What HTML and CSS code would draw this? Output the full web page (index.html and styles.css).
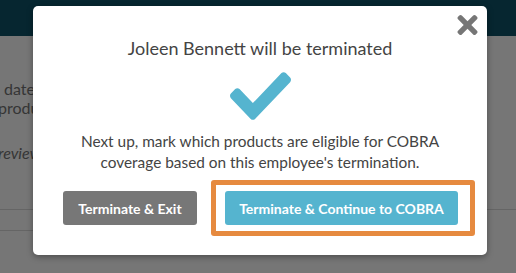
FILE: index.html
```html
<!DOCTYPE html>
<html>
<head>
<meta charset="utf-8">
<link rel="stylesheet" href="styles.css">
</head>
<body>
<div class="page">
  <div class="topbar"></div>
  <div class="content">
    <p class="bg-line l1">dates for the termination</p>
    <p class="bg-line l2">products listed below</p>
    <p class="bg-line l3">review the details</p>
    <div class="rule r1"></div>
    <div class="rule r2"></div>
  </div>
</div>

<div class="modal">
  <button class="close" aria-label="Close">
    <svg viewBox="0 80 352 352" width="21" height="20"><path fill="#767676" d="M242.72 256l100.07-100.07c12.28-12.28 12.28-32.19 0-44.48l-22.240-22.24c-12.28-12.28-32.19-12.28-44.48 0L176 189.28 75.93 89.21c-12.28-12.28-32.19-12.280-44.48 0L9.21 111.45c-12.28 12.28-12.28 32.19 0 44.48L109.28 256 9.21 356.070c-12.28 12.28-12.28 32.19 0 44.48l22.24 22.24c12.28 12.28 32.2 12.28 44.48 0L176 322.72l100.07 100.07c12.28 12.28 32.2 12.28 44.48 0l22.24-22.24c12.28-12.28 12.28-32.19 0-44.48L242.72 256z"/></svg>
  </button>
  <h2 class="title">Joleen Bennett will be terminated</h2>
  <div class="check">
    <svg viewBox="0 64 512 384" width="61" height="48" preserveAspectRatio="none"><path fill="#55b4cf" d="M173.898 439.404l-166.4-166.4c-9.997-9.997-9.997-26.206 0-36.204l36.203-36.204c9.997-9.998 26.207-9.998 36.204 0L192 312.69 432.095 72.596c9.997-9.997 26.207-9.997 36.204 0l36.203 36.204c9.997 9.997 9.997 26.206 0 36.204l-294.4 294.401c-9.998 9.997-26.207 9.997-36.204-.001z"/></svg>
  </div>
  <p class="msg">Next up, mark which products are eligible for COBRA<br>coverage based on this employee's termination.</p>
  <div class="actions">
    <button class="btn btn-gray">Terminate &amp; Exit</button>
    <div class="highlight">
      <button class="btn btn-blue">Terminate &amp; Continue to COBRA</button>
    </div>
  </div>
</div>
</body>
</html>
```

FILE: styles.css
```css
html, body {
  margin: 0;
  padding: 0;
}
body {
  width: 516px;
  height: 273px;
  overflow: hidden;
  position: relative;
  background: #767676;
  font-family: Lato, "Open Sans", sans-serif;
}
.page {
  height: 273px;
}
.topbar {
  height: 36px;
  background: #062630;
}
.content {
  height: 237px;
  padding-top: 43px;
  box-sizing: border-box;
}
.bg-line {
  margin: 0;
  font-size: 16px;
  line-height: 19px;
  color: #353535;
  white-space: nowrap;
}
.l1 { padding-left: 4px; }
.l2 { margin-left: -2px; }
.l3 { margin-left: -2px; margin-top: 26px; font-style: italic; }
.rule {
  height: 1px;
  background: #656565;
}
.r1 { margin-top: 47px; }
.r2 { margin-top: 20px; width: 40px; }

.modal {
  position: absolute;
  left: 33px;
  top: 6px;
  width: 454px;
  height: 249px;
  background: #fff;
  border-radius: 5px;
  box-shadow: 0 2px 6px rgba(0,0,0,0.35);
  box-sizing: border-box;
  padding-top: 30px;
  display: flex;
  flex-direction: column;
  align-items: center;
}
.close {
  position: absolute;
  top: 9px;
  right: 9px;
  padding: 0;
  border: 0;
  background: none;
  line-height: 0;
}
.title {
  margin: 0;
  font-size: 18px;
  font-weight: 400;
  line-height: 24px;
  color: #444;
}
.check {
  margin-top: 12px;
  line-height: 0;
  padding-left: 1px;
}
.msg {
  margin: 11px 0 0;
  text-align: center;
  font-size: 15.4px;
  line-height: 21px;
  color: #444;
}
.actions {
  margin-top: 7px;
  margin-left: 18px;
  display: flex;
  align-items: center;
  gap: 14px;
}
.btn {
  height: 34px;
  border: 0;
  border-radius: 3px;
  color: #fff;
  font-family: Lato, "Open Sans", sans-serif;
  font-size: 14px;
  font-weight: 700;
  padding: 0;
}
.btn-gray {
  width: 134px;
  background: #777;
}
.highlight {
  border: 5px solid #e68a3f;
  border-radius: 3px;
  padding: 6px 12px 6px 9px;
  line-height: 0;
}
.btn-blue {
  width: 233px;
  background: #55b4cf;
}
```
